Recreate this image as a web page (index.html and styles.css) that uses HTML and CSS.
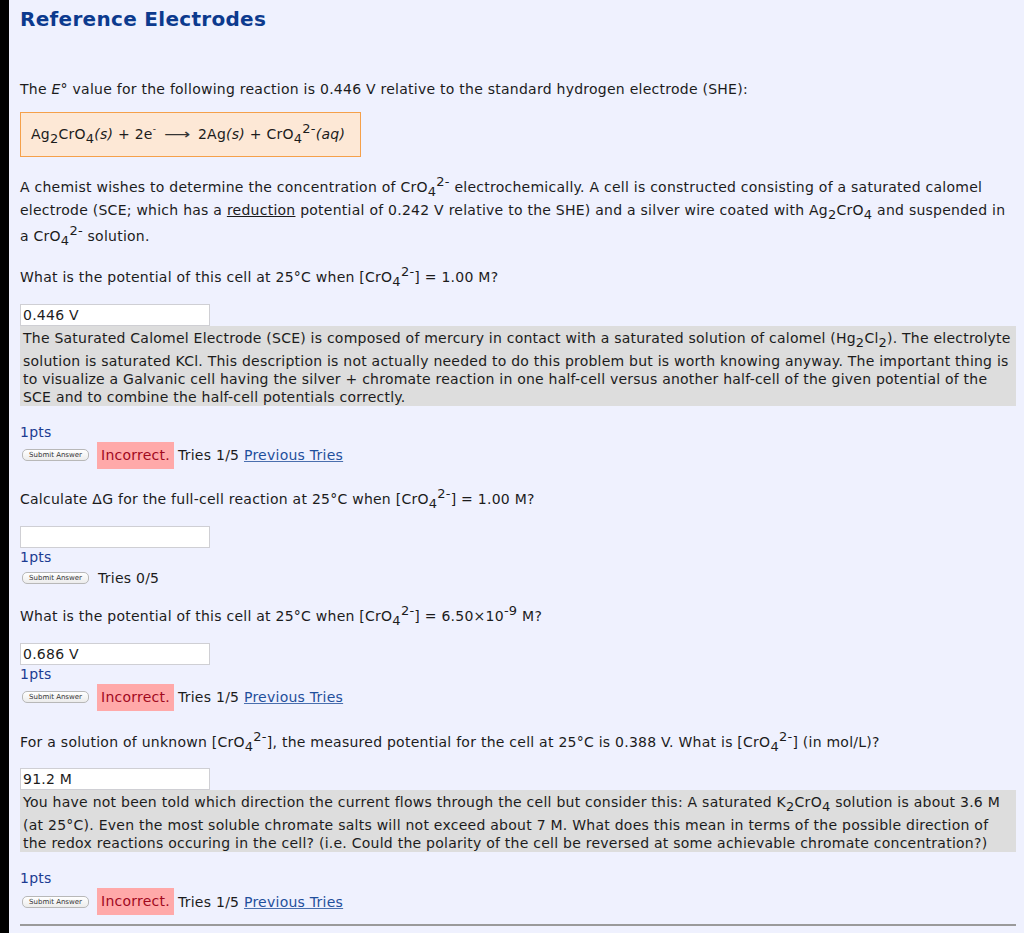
FILE: index.html
```html
<!DOCTYPE html>
<html>
<head>
<meta charset="utf-8">
<link rel="stylesheet" href="styles.css">
</head>
<body>
<div class="page">
  <h1 class="title">Reference Electrodes</h1>

  <p class="intro">The <i>E</i>° value for the following reaction is 0.446 V relative to the standard hydrogen electrode (SHE):</p>

  <div class="reaction">Ag<sub>2</sub>CrO<sub>4</sub><i>(s)</i> + 2e<sup class="small">-</sup> <span class="arrow">⟶</span> 2Ag<i>(s)</i> + CrO<sub>4</sub><sup>2-</sup><i>(aq)</i></div>

  <p class="para">A chemist wishes to determine the concentration of CrO<sub>4</sub><sup>2-</sup> electrochemically. A cell is constructed consisting of a saturated calomel electrode (SCE; which has a <u>reduction</u> potential of 0.242 V relative to the SHE) and a silver wire coated with Ag<sub>2</sub>CrO<sub>4</sub> and suspended in a CrO<sub>4</sub><sup>2-</sup> solution.</p>

  <section class="q q1">
    <p class="question">What is the potential of this cell at 25°C when [CrO<sub>4</sub><sup>2-</sup>] = 1.00 M?</p>
    <div class="answer">0.446 V</div>
    <div class="hint hint-tight">The Saturated Calomel Electrode (SCE) is composed of mercury in contact with a saturated solution of calomel (Hg<sub>2</sub>Cl<sub>2</sub>). The electrolyte solution is saturated KCl. This description is not actually needed to do this problem but is worth knowing anyway. The important thing is to visualize a Galvanic cell having the silver + chromate reaction in one half-cell versus another half-cell of the given potential of the SCE and to combine the half-cell potentials correctly.</div>
    <div class="pts pts-gap">1pts</div>
    <div class="status">
      <button class="submit">Submit Answer</button>
      <span class="incorrect">Incorrect.</span>
      <span class="tries">Tries 1/5 <a href="#" class="prev">Previous Tries</a></span>
    </div>
  </section>

  <section class="q q2">
    <p class="question">Calculate ΔG for the full-cell reaction at 25°C when [CrO<sub>4</sub><sup>2-</sup>] = 1.00 M?</p>
    <div class="answer"></div>
    <div class="pts">1pts</div>
    <div class="status status-short">
      <button class="submit">Submit Answer</button>
      <span class="tries plain">Tries 0/5</span>
    </div>
  </section>

  <section class="q q3">
    <p class="question">What is the potential of this cell at 25°C when [CrO<sub>4</sub><sup>2-</sup>] = 6.50×10<sup>-9</sup> M?</p>
    <div class="answer">0.686 V</div>
    <div class="pts">1pts</div>
    <div class="status">
      <button class="submit">Submit Answer</button>
      <span class="incorrect">Incorrect.</span>
      <span class="tries">Tries 1/5 <a href="#" class="prev">Previous Tries</a></span>
    </div>
  </section>

  <section class="q q4">
    <p class="question">For a solution of unknown [CrO<sub>4</sub><sup>2-</sup>], the measured potential for the cell at 25°C is 0.388 V. What is [CrO<sub>4</sub><sup>2-</sup>] (in mol/L)?</p>
    <div class="answer">91.2 M</div>
    <div class="hint">You have not been told which direction the current flows through the cell but consider this: A saturated K<sub>2</sub>CrO<sub>4</sub> solution is about 3.6 M (at 25°C). Even the most soluble chromate salts will not exceed about 7 M. What does this mean in terms of the possible direction of the redox reactions occuring in the cell? (i.e. Could the polarity of the cell be reversed at some achievable chromate concentration?)</div>
    <div class="pts pts-gap">1pts</div>
    <div class="status">
      <button class="submit">Submit Answer</button>
      <span class="incorrect">Incorrect.</span>
      <span class="tries">Tries 1/5 <a href="#" class="prev">Previous Tries</a></span>
    </div>
  </section>

  <div class="rule"></div>
</div>
</body>
</html>
```

FILE: styles.css
```css
html, body {
  margin: 0;
  padding: 0;
}
body {
  background: #eff1fe;
  font-family: "DejaVu Sans", Verdana, sans-serif;
  font-size: 14px;
  letter-spacing: 0.25px;
  line-height: 18px;
  color: #1c1c1c;
  min-height: 933px;
  border-left: 9px solid #000;
}
.page {
  padding: 0 8px 0 11px;
}
.title {
  margin: 7px 0 0;
  font-size: 20px;
  letter-spacing: 0.3px;
  line-height: 24px;
  font-weight: bold;
  color: #0c3a8e;
}
p {
  margin: 0;
}
sub, sup {
  font-size: 13px;
  line-height: 16.6px;
}
sub {
  vertical-align: -4px;
}
sup {
  vertical-align: 6px;
}
sup.small {
  font-size: 9px;
  line-height: 9px;
  vertical-align: 7px;
}
.intro {
  margin-top: 49px;
}
.reaction {
  display: inline-block;
  margin-top: 14px;
  height: 43px;
  line-height: 43px;
  padding: 0 15px 0 10px;
  border: 1px solid #f5a04a;
  background: #fde8d6;
}
.arrow {
  color: #333;
  display: inline-block;
  transform: scaleX(1.3);
  margin: 0 6px;
}
.para {
  margin-top: 17px;
}
.q {
  display: flex;
  flex-direction: column;
  align-items: flex-start;
}
.q1 { margin-top: 14.5px; }
.q2 { margin-top: 17px; }
.q3 { margin-top: 14px; }
.q4 { margin-top: 18px; }
.answer {
  margin-top: 13.3px;
  box-sizing: border-box;
  width: 190px;
  height: 22px;
  background: #fff;
  border: 1px solid #cfcfd4;
  padding: 0 0 0 2px;
  line-height: 20px;
}
.hint {
  align-self: stretch;
  background: #dddddd;
  padding: 3px 3px 0 3px;
}
.hint-tight {
  letter-spacing: 0.23px;
  padding-right: 0;
}
.pts {
  color: #1c3c92;
}
.pts-gap {
  margin-top: 17px;
}
.status {
  display: flex;
  align-items: center;
  margin-top: 1px;
  height: 27px;
}
.status-short {
  height: 22px;
}
.submit {
  margin: 0 8px 0 2px;
  width: 67px;
  height: 12px;
  padding: 0;
  font-family: "DejaVu Sans", Verdana, sans-serif;
  font-size: 7px;
  letter-spacing: 0;
  line-height: 10px;
  color: #333;
  border: 1px solid #b8b8b8;
  border-radius: 5px;
  background: linear-gradient(#ffffff, #ececec);
}
.incorrect {
  background: #ffa9a9;
  color: #a10a1e;
  padding: 0 4px;
  height: 27px;
  line-height: 27px;
}
.tries {
  margin-left: 4px;
}
.tries.plain {
  margin-left: 1px;
}
.prev {
  color: #1f4f9c;
  text-decoration: underline;
  text-decoration-color: #4a6fae;
}
.rule {
  margin-top: 9px;
  height: 2px;
  background: #9a9a9a;
}
```
